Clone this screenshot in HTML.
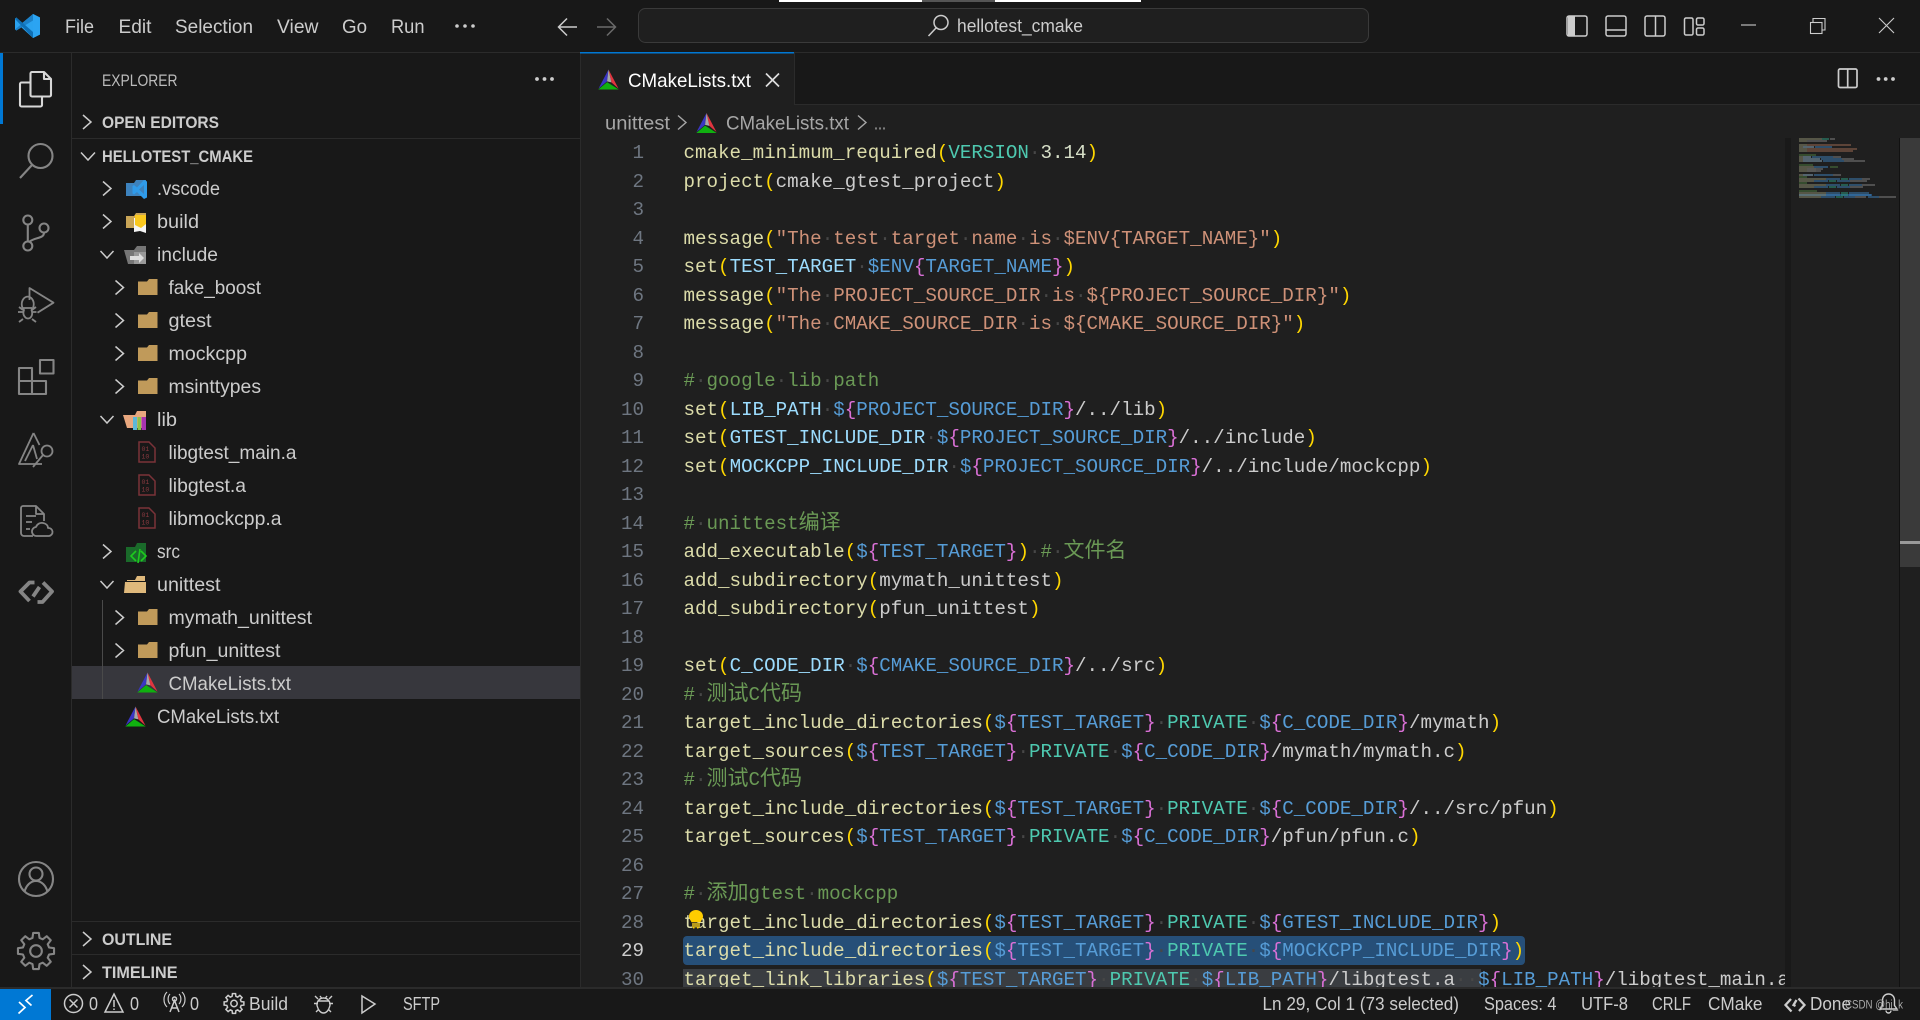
<!DOCTYPE html>
<html lang="en"><head><meta charset="utf-8"><title>CMakeLists.txt - hellotest_cmake</title>
<style>
html,body{margin:0;padding:0;width:1920px;height:1020px;overflow:hidden;background:#1f1f1f}
#bg{position:absolute;left:0;top:0;z-index:0}
#ui{position:absolute;left:0;top:0;z-index:2}
svg text{font-family:"Liberation Sans",sans-serif;fill:#ccc}
#nums,#code{position:absolute;top:139px;font:19.2px/28.5px "Liberation Mono",monospace}
#nums{left:600px;width:44px;text-align:right;color:#6e7681;z-index:1}
#nums div,#code .l{height:28.5px;white-space:pre}
#nums .a{color:#ccc}
#clip{position:absolute;left:0;top:105px;width:1791px;height:882px;overflow:hidden;z-index:1}
#clip #nums,#clip #code{top:34px}
#code{left:683.5px;color:#ccc}
#code i{font-style:normal}
#code s{text-decoration:none;color:#474747}
.f{color:#dcdcaa}.p{color:#ffd700}.k{color:#4ec9b0}.t{color:#ce9178}.v{color:#9cdcfe}.d{color:#569cd6}.m{color:#da70d6}.c,.c s{color:#6a9955}.n{color:#d7dfc8}
.z{font:21px/1 "Noto Sans CJK SC","Liberation Sans",sans-serif;color:#6a9955}
#sel{position:absolute;left:683px;top:831px;width:842px;height:29px;background:#264f78;border-radius:4px}
#hl{position:absolute;left:683px;top:864px;width:798px;height:18px;background:#3a3d41}
</style></head><body>
<svg id="bg" width="1920" height="1020" viewBox="0 0 1920 1020">
<rect width="1920" height="1020" fill="#1f1f1f"/>
<rect width="1920" height="104" fill="#181818"/>
<rect y="0" width="72" height="988" fill="#181818"/>
<rect x="72" y="53" width="508" height="935" fill="#181818"/>
<rect x="580" y="53" width="214" height="52" fill="#1f1f1f"/>
</svg>
<div id="clip">
<div id="sel"></div><div id="hl"></div>
<div id="nums"><div>1</div><div>2</div><div>3</div><div>4</div><div>5</div><div>6</div><div>7</div><div>8</div><div>9</div><div>10</div><div>11</div><div>12</div><div>13</div><div>14</div><div>15</div><div>16</div><div>17</div><div>18</div><div>19</div><div>20</div><div>21</div><div>22</div><div>23</div><div>24</div><div>25</div><div>26</div><div>27</div><div>28</div><div class="a">29</div><div>30</div></div>
<div id="code">
<div class="l"><i class="f">cmake_minimum_required</i><i class="p">(</i><i class="k">VERSION</i><s>·</s><i class="n">3.14</i><i class="p">)</i></div>
<div class="l"><i class="f">project</i><i class="p">(</i>cmake_gtest_project<i class="p">)</i></div>
<div class="l"></div>
<div class="l"><i class="f">message</i><i class="p">(</i><i class="t">"The<s>·</s>test<s>·</s>target<s>·</s>name<s>·</s>is<s>·</s>$ENV{TARGET_NAME}"</i><i class="p">)</i></div>
<div class="l"><i class="f">set</i><i class="p">(</i><i class="v">TEST_TARGET</i><s>·</s><i class="d">$ENV</i><i class="m">{</i><i class="d">TARGET_NAME</i><i class="m">}</i><i class="p">)</i></div>
<div class="l"><i class="f">message</i><i class="p">(</i><i class="t">"The<s>·</s>PROJECT_SOURCE_DIR<s>·</s>is<s>·</s>${PROJECT_SOURCE_DIR}"</i><i class="p">)</i></div>
<div class="l"><i class="f">message</i><i class="p">(</i><i class="t">"The<s>·</s>CMAKE_SOURCE_DIR<s>·</s>is<s>·</s>${CMAKE_SOURCE_DIR}"</i><i class="p">)</i></div>
<div class="l"></div>
<div class="l"><i class="c">#<s>·</s>google<s>·</s>lib<s>·</s>path</i></div>
<div class="l"><i class="f">set</i><i class="p">(</i><i class="v">LIB_PATH</i><s>·</s><i class="d">$</i><i class="m">{</i><i class="d">PROJECT_SOURCE_DIR</i><i class="m">}</i>/../lib<i class="p">)</i></div>
<div class="l"><i class="f">set</i><i class="p">(</i><i class="v">GTEST_INCLUDE_DIR</i><s>·</s><i class="d">$</i><i class="m">{</i><i class="d">PROJECT_SOURCE_DIR</i><i class="m">}</i>/../include<i class="p">)</i></div>
<div class="l"><i class="f">set</i><i class="p">(</i><i class="v">MOCKCPP_INCLUDE_DIR</i><s>·</s><i class="d">$</i><i class="m">{</i><i class="d">PROJECT_SOURCE_DIR</i><i class="m">}</i>/../include/mockcpp<i class="p">)</i></div>
<div class="l"></div>
<div class="l"><i class="c">#<s>·</s>unittest</i><span class="z">编译</span></div>
<div class="l"><i class="f">add_executable</i><i class="p">(</i><i class="d">$</i><i class="m">{</i><i class="d">TEST_TARGET</i><i class="m">}</i><i class="p">)</i><s>·</s><i class="c">#<s>·</s></i><span class="z">文件名</span></div>
<div class="l"><i class="f">add_subdirectory</i><i class="p">(</i>mymath_unittest<i class="p">)</i></div>
<div class="l"><i class="f">add_subdirectory</i><i class="p">(</i>pfun_unittest<i class="p">)</i></div>
<div class="l"></div>
<div class="l"><i class="f">set</i><i class="p">(</i><i class="v">C_CODE_DIR</i><s>·</s><i class="d">$</i><i class="m">{</i><i class="d">CMAKE_SOURCE_DIR</i><i class="m">}</i>/../src<i class="p">)</i></div>
<div class="l"><i class="c">#<s>·</s></i><span class="z">测试</span><i class="c">C</i><span class="z">代码</span></div>
<div class="l"><i class="f">target_include_directories</i><i class="p">(</i><i class="d">$</i><i class="m">{</i><i class="d">TEST_TARGET</i><i class="m">}</i><s>·</s><i class="k">PRIVATE</i><s>·</s><i class="d">$</i><i class="m">{</i><i class="d">C_CODE_DIR</i><i class="m">}</i>/mymath<i class="p">)</i></div>
<div class="l"><i class="f">target_sources</i><i class="p">(</i><i class="d">$</i><i class="m">{</i><i class="d">TEST_TARGET</i><i class="m">}</i><s>·</s><i class="k">PRIVATE</i><s>·</s><i class="d">$</i><i class="m">{</i><i class="d">C_CODE_DIR</i><i class="m">}</i>/mymath/mymath.c<i class="p">)</i></div>
<div class="l"><i class="c">#<s>·</s></i><span class="z">测试</span><i class="c">C</i><span class="z">代码</span></div>
<div class="l"><i class="f">target_include_directories</i><i class="p">(</i><i class="d">$</i><i class="m">{</i><i class="d">TEST_TARGET</i><i class="m">}</i><s>·</s><i class="k">PRIVATE</i><s>·</s><i class="d">$</i><i class="m">{</i><i class="d">C_CODE_DIR</i><i class="m">}</i>/../src/pfun<i class="p">)</i></div>
<div class="l"><i class="f">target_sources</i><i class="p">(</i><i class="d">$</i><i class="m">{</i><i class="d">TEST_TARGET</i><i class="m">}</i><s>·</s><i class="k">PRIVATE</i><s>·</s><i class="d">$</i><i class="m">{</i><i class="d">C_CODE_DIR</i><i class="m">}</i>/pfun/pfun.c<i class="p">)</i></div>
<div class="l"></div>
<div class="l"><i class="c">#<s>·</s></i><span class="z">添加</span><i class="c">gtest<s>·</s>mockcpp</i></div>
<div class="l"><i class="f">target_include_directories</i><i class="p">(</i><i class="d">$</i><i class="m">{</i><i class="d">TEST_TARGET</i><i class="m">}</i><s>·</s><i class="k">PRIVATE</i><s>·</s><i class="d">$</i><i class="m">{</i><i class="d">GTEST_INCLUDE_DIR</i><i class="m">}</i><i class="p">)</i></div>
<div class="l"><i class="f">target_include_directories</i><i class="p">(</i><i class="d">$</i><i class="m">{</i><i class="d">TEST_TARGET</i><i class="m">}</i><s>·</s><i class="k">PRIVATE</i><s>·</s><i class="d">$</i><i class="m">{</i><i class="d">MOCKCPP_INCLUDE_DIR</i><i class="m">}</i><i class="p">)</i></div>
<div class="l"><i class="f">target_link_libraries</i><i class="p">(</i><i class="d">$</i><i class="m">{</i><i class="d">TEST_TARGET</i><i class="m">}</i><s>·</s><i class="k">PRIVATE</i><s>·</s><i class="d">$</i><i class="m">{</i><i class="d">LIB_PATH</i><i class="m">}</i>/libgtest.a<s>··</s><i class="d">$</i><i class="m">{</i><i class="d">LIB_PATH</i><i class="m">}</i>/libgtest_main.a</div>
</div>
</div>
<svg id="ui" width="1920" height="1020" viewBox="0 0 1920 1020" fill="none">
<defs>
<symbol id="cm" viewBox="0 0 22 21"><path d="M11 0L.5 20l9-7.500z" fill="#3a35c4"/><path d="M11 0l10.500 20-7.500-6.500z" fill="#e0353f"/><path d="M11 0L9.500 12.500l4.500 1z" fill="#a8a8a8"/><path d="M.3 21h21.400L9.500 13.200z" fill="#10b010"/></symbol>
<symbol id="fo" viewBox="0 0 20 16"><path d="M0 2.500h9L11 0h8.500v16H0z" fill="#c09a5a"/></symbol>
<symbol id="bn" viewBox="0 0 18 22"><path d="M1 1h10l6 6v14H1z" stroke="#7a3238" stroke-width="1.500" fill="none"/><text x="3.500" y="10" style="font:6.500px 'Liberation Mono',monospace;fill:#8a3a40">01</text><text x="3.500" y="17.500" style="font:6.500px 'Liberation Mono',monospace;fill:#8a3a40">10</text></symbol>
<symbol id="gr" viewBox="-115 -115 230 230"><path vector-effect="non-scaling-stroke" d="M71.500-19.200L98.800-15.600V15.600L71.500 19.200L64.100 37L80.900 58.800L58.800 80.900L37 64.100L19.200 71.500L15.600 98.800H-15.600L-19.200 71.500L-37 64.100L-58.800 80.900L-80.900 58.800L-64.100 37L-71.500 19.200L-98.800 15.600V-15.600L-71.500-19.200L-64.100-37L-80.900-58.800L-58.800-80.900L-37-64.100L-19.200-71.500L-15.600-98.800H15.600L19.200-71.500L37-64.100L58.800-80.900L80.900-58.800L64.100-37z"/><circle vector-effect="non-scaling-stroke" r="32"/></symbol>
</defs>

<!-- top stripes -->
<rect x="779" y="0" width="143" height="2" fill="#fff"/><rect x="922" y="0" width="73" height="2" fill="#555"/><rect x="995" y="0" width="146" height="2" fill="#fff"/>

<!-- borders -->
<g fill="#2b2b2b">
<rect y="52" width="1920" height="1"/><rect x="71" y="53" width="1" height="935"/><rect x="580" y="53" width="1" height="935"/>
<rect x="794" y="53" width="1" height="52"/><rect x="795" y="104" width="1125" height="1"/>
<rect x="72" y="138" width="508" height="1"/><rect x="72" y="921" width="508" height="1"/><rect x="72" y="954" width="508" height="1"/>
</g>
<rect x="580" y="52" width="214" height="1.500" fill="#0078d4"/>

<!-- logo -->
<path d="M33 14l7 3.500v17L33 38 21 27l-4.500 3.500-1.500-1v-11l1.500-1L21 24z" fill="#2aa3f0"/>
<path d="M33 14L15 29.500l1.500 1L33 20.500z" fill="#1b80c8"/><path d="M33 38L15 19l1.500-1.500L33 32z" fill="#0e6fb5"/><path d="M33 14l7 3.500v17L33 38z" fill="#2ba4f2"/>

<!-- menu -->
<g font-size="19.500">
<text x="65" y="33" textLength="29" lengthAdjust="spacingAndGlyphs">File</text>
<text x="118.500" y="33" textLength="33" lengthAdjust="spacingAndGlyphs">Edit</text>
<text x="175" y="33" textLength="78" lengthAdjust="spacingAndGlyphs">Selection</text>
<text x="277" y="33" textLength="41.500" lengthAdjust="spacingAndGlyphs">View</text>
<text x="342" y="33" textLength="25" lengthAdjust="spacingAndGlyphs">Go</text>
<text x="391" y="33" textLength="33.500" lengthAdjust="spacingAndGlyphs">Run</text>
</g>
<g fill="#ccc"><circle cx="457" cy="26" r="1.800"/><circle cx="465" cy="26" r="1.800"/><circle cx="473" cy="26" r="1.800"/></g>
<path d="M577 27H559M567 18.500L558.500 27l8.500 8.500" stroke="#ccc" stroke-width="1.500"/>
<path d="M597 27h18M607 18.500l8.500 8.500-8.500 8.500" stroke="#6a6a6a" stroke-width="1.500"/>
<rect x="638.500" y="8.500" width="730" height="34" rx="7" fill="#1f1f1f" stroke="#3a3a3a"/>
<circle cx="941" cy="22.500" r="7" stroke="#ccc" stroke-width="1.500"/><path d="M936 28l-7.500 8" stroke="#ccc" stroke-width="1.500"/>
<text x="957" y="32" font-size="18" textLength="126" lengthAdjust="spacingAndGlyphs">hellotest_cmake</text>

<!-- layout controls -->
<g stroke="#ccc" stroke-width="1.500">
<rect x="1567" y="16" width="20" height="20" rx="2"/><path d="M1568 16.500h7v19h-7z" fill="#ccc" stroke="none"/>
<rect x="1606" y="16" width="20" height="20" rx="2"/><path d="M1606 30h20"/>
<rect x="1645" y="16" width="20" height="20" rx="2"/><path d="M1655.500 16v20"/>
<rect x="1684.500" y="18" width="8.500" height="17" rx="1.500"/><rect x="1696.500" y="18" width="7.500" height="7" rx="1.500"/><rect x="1696.500" y="28" width="7.500" height="7" rx="1.500"/>
</g>
<g stroke="#ccc" stroke-width="1.100">
<path d="M1741 25h15"/>
<rect x="1810.500" y="22.500" width="11.500" height="11"/><path d="M1813 22v-3.500h12v11.500h-3"/>
<path d="M1879 18l15 15M1894 18l-15 15"/>
</g>

<!-- activity bar -->
<rect x="0" y="53" width="3" height="71" fill="#0078d4"/>
<g stroke="#d7d7d7" stroke-width="2.100" stroke-linejoin="round">
<path d="M32 72h12l7 7v16a1.500 1.500 0 0 1-1.500 1.500H32a1.500 1.500 0 0 1-1.500-1.500V73.500A1.500 1.500 0 0 1 32 72zM44 72v7h7"/>
<path d="M30.500 82.500h-9a1.500 1.500 0 0 0-1.500 1.500v21a1.500 1.500 0 0 0 1.500 1.500H40.500a1.500 1.500 0 0 0 1.500-1.500v-8.500"/>
</g>
<g stroke="#858585" stroke-width="2.100" stroke-linejoin="round">
<circle cx="40.500" cy="156" r="12"/><path d="M32 165l-12 13"/>
<circle cx="27.800" cy="220" r="4.500"/><circle cx="27.800" cy="246" r="4.500"/><circle cx="44" cy="228" r="4.500"/><path d="M27.800 224.500v17M44 232.500c0 6.500-9 4.500-15 9.500"/>
<path d="M29.500 300v-12l24 14.700-16 10M24 310a6 7.500 0 1 1 7.500 0c1 2.500 1 5-.5 7-1.500 2-4.500 2-6 0-2-2-2-4.500-1-7zM18 312h5M31.500 312h5M19 307l4 3M36 307l-4 3M19 322l4-3M36 322l-4-3M23 308h9" stroke-width="1.800"/>
<path d="M19 368h13v13H19zM19 381h13v13H19zM32 381h14v13H32zM40 360h13.500v13.500H40z"/>
<path d="M33.500 433L19 464h23M33.500 433l6 12M33 445l-8 16M33 445l4 14" stroke-width="1.800"/><circle cx="47" cy="451" r="5.500" stroke-width="1.800"/><path d="M43 455l-10 12" stroke-width="1.800"/>
<path d="M33 536H24a3 3 0 0 1-3-3v-25a2 2 0 0 1 2-2h13l8 8v7M36 506v8h8M26 516h10M26 522h6M26 529h4" stroke-width="1.800"/>
<path d="M37 536a4.500 4.500 0 0 1-1-9c1-3 4-4.500 7-4 3 .5 5 2.500 5 5a4 4 0 0 1 1 8z" stroke-width="1.800"/>
<path d="M34.500 582.500H29.500L20.500 591.500 29.500 601M37.500 602H42.500L52 591.500 43 582.500M39.500 587l-6.500 9.500" stroke-width="3.800"/>
<circle cx="36" cy="879" r="17"/><circle cx="36" cy="874" r="6.500"/><path d="M24.500 892c1.500-7 6.500-11 11.500-11s10 4 11.500 11"/>
<use href="#gr" x="15" y="930" width="42" height="42" stroke="#858585" stroke-width="2.100"/>
</g>

<!-- sidebar headers -->
<text x="102" y="86" font-size="16.500" textLength="75.500" lengthAdjust="spacingAndGlyphs" style="fill:#bbb">EXPLORER</text>
<g fill="#ccc"><circle cx="537" cy="79" r="1.900"/><circle cx="544.500" cy="79" r="1.900"/><circle cx="552" cy="79" r="1.900"/></g>
<g font-size="16.500" font-weight="700">
<text x="102" y="128" textLength="117" lengthAdjust="spacingAndGlyphs">OPEN EDITORS</text>
<text x="102" y="162" textLength="151" lengthAdjust="spacingAndGlyphs">HELLOTEST_CMAKE</text>
<text x="102" y="945" textLength="70" lengthAdjust="spacingAndGlyphs">OUTLINE</text>
<text x="102" y="978" textLength="75.500" lengthAdjust="spacingAndGlyphs">TIMELINE</text>
</g>

<!-- selection row -->
<rect x="72" y="666" width="508" height="33" fill="#37373d"/>
<rect x="102" y="600" width="1" height="99" fill="#4a4a4a"/>

<!-- chevrons -->
<g stroke="#ccc" stroke-width="1.500">
<path d="M83 115l8 7-8 7M81 152.500l7 7.500 7-7.500M83 932l8 7-8 7M83 965l8 7-8 7"/>
<path d="M103 181.500l8 7-8 7M103 214.500l8 7-8 7M100.500 251l6.500 7 6.500-7M115.500 280.500l8 7-8 7M115.500 313.500l8 7-8 7M115.500 346.500l8 7-8 7M115.500 379.500l8 7-8 7M100.500 416l6.500 7 6.500-7M103 544.500l8 7-8 7M100.500 581l6.500 7 6.500-7M115.500 610.500l8 7-8 7M115.500 643.500l8 7-8 7"/>
</g>

<!-- tree icons -->
<path d="M126 183h8l2-3h10v16h-20z" fill="#3d82bd"/>
<path d="M144 180l3 1.500v16L144 199l-7-7-3 2.500-1.500-1V186l1.500-1 3 2.500z" fill="#2f9bea"/><path d="M144 185l-5 4.500 5 4.500z" fill="#3d82bd"/>
<path d="M126 216h8l2-3h10v15h-20z" fill="#c9a557"/>
<path d="M134 218h12v15l-6-2-6 1z" fill="#f4f4f4"/><path d="M135 215h11v9l-5 4-6-3z" fill="#fac81e"/>
<path d="M124 250h10l3-4h9v18h-18z" fill="#767676"/><path d="M134 252h12v12h-12z" fill="#999"/><path d="M130 256h9v-3l5 5-5 5v-3h-9z" fill="#ddd"/>
<path d="M123 415h12l2-4h9v17h-19z" fill="#e8a77e"/>
<rect x="133" y="417" width="4" height="13" fill="#5bb8d8"/><rect x="137.500" y="417" width="3.500" height="13" fill="#8bc34a"/><rect x="141.500" y="417" width="4.500" height="13" fill="#a833b0"/>
<path d="M126 547h9l2-4h9v19h-20z" fill="#1a6a2a"/>
<path d="M136 551l-5 5 5 5M141 551l5 5-5 5M140 549l-2 14" stroke="#1ecb1e" stroke-width="1.600"/>
<path d="M127 580h8l2-4h8v5h-18zM124 593l1-11h21v11z" fill="#dfb97c"/>
<use href="#fo" x="138" y="279" width="20" height="16"/><use href="#fo" x="138" y="312" width="20" height="16"/><use href="#fo" x="138" y="345" width="20" height="16"/><use href="#fo" x="138" y="378" width="20" height="16"/>
<use href="#fo" x="138" y="609" width="20" height="16"/><use href="#fo" x="138" y="642" width="20" height="16"/>
<use href="#bn" x="138" y="441" width="18" height="22"/><use href="#bn" x="138" y="474" width="18" height="22"/><use href="#bn" x="138" y="507" width="18" height="22"/>
<use href="#cm" x="137" y="672" width="21" height="21"/><use href="#cm" x="125" y="706" width="21" height="21"/>

<!-- tree labels -->
<g font-size="19.500">
<text x="157" y="195" textLength="63" lengthAdjust="spacingAndGlyphs">.vscode</text>
<text x="157" y="228" textLength="42" lengthAdjust="spacingAndGlyphs">build</text>
<text x="157" y="261" textLength="61" lengthAdjust="spacingAndGlyphs">include</text>
<text x="168.500" y="294" textLength="92.500" lengthAdjust="spacingAndGlyphs">fake_boost</text>
<text x="168.500" y="327" textLength="43" lengthAdjust="spacingAndGlyphs">gtest</text>
<text x="168.500" y="360" textLength="78.500" lengthAdjust="spacingAndGlyphs">mockcpp</text>
<text x="168.500" y="393" textLength="92.500" lengthAdjust="spacingAndGlyphs">msinttypes</text>
<text x="157" y="426" textLength="20" lengthAdjust="spacingAndGlyphs">lib</text>
<text x="168.500" y="459" textLength="128" lengthAdjust="spacingAndGlyphs">libgtest_main.a</text>
<text x="168.500" y="492" textLength="77.500" lengthAdjust="spacingAndGlyphs">libgtest.a</text>
<text x="168.500" y="525" textLength="113" lengthAdjust="spacingAndGlyphs">libmockcpp.a</text>
<text x="157" y="558" textLength="23" lengthAdjust="spacingAndGlyphs">src</text>
<text x="157" y="591" textLength="63.500" lengthAdjust="spacingAndGlyphs">unittest</text>
<text x="168.500" y="624" textLength="143.500" lengthAdjust="spacingAndGlyphs">mymath_unittest</text>
<text x="168.500" y="657" textLength="112" lengthAdjust="spacingAndGlyphs">pfun_unittest</text>
<text x="168.500" y="690" textLength="122.500" lengthAdjust="spacingAndGlyphs">CMakeLists.txt</text>
<text x="157" y="723" textLength="122" lengthAdjust="spacingAndGlyphs">CMakeLists.txt</text>
</g>

<!-- tab -->
<use href="#cm" x="598" y="69" width="21" height="21"/>
<text x="628" y="87" font-size="19.500" textLength="123" lengthAdjust="spacingAndGlyphs" style="fill:#fff">CMakeLists.txt</text>
<path d="M766 73.500l13 13M779 73.500l-13 13" stroke="#ddd" stroke-width="1.700"/>
<g stroke="#ccc" stroke-width="1.700"><rect x="1838.500" y="69" width="18.500" height="18.500" rx="1.500"/><path d="M1847.700 69v18.500"/></g>
<g fill="#ccc"><circle cx="1878.500" cy="79" r="1.900"/><circle cx="1885.700" cy="79" r="1.900"/><circle cx="1893" cy="79" r="1.900"/></g>

<!-- breadcrumb -->
<g font-size="19.500">
<text x="605" y="129.500" textLength="65" lengthAdjust="spacingAndGlyphs" style="fill:#a6a6a6">unittest</text>
<text x="726" y="129.500" textLength="123" lengthAdjust="spacingAndGlyphs" style="fill:#a6a6a6">CMakeLists.txt</text>
<text x="874" y="129.500" textLength="12" lengthAdjust="spacingAndGlyphs" style="fill:#a6a6a6">...</text>
</g>
<path d="M678 115.500l8 7-8 7M858 115.500l8 7-8 7" stroke="#a6a6a6" stroke-width="1.400"/>
<use href="#cm" x="696" y="113" width="21" height="20"/>

<!-- lightbulb -->
<path d="M696 910c4 0 7 2.800 7 6.300 0 2.700-1.700 4-2.500 6h-9c-.8-2-2.500-3.300-2.500-6 0-3.500 3-6.300 7-6.300z" fill="#ffcc00"/>
<path d="M692 923h8v4.500h-8z" fill="#b89a1c"/><path d="M693 927h1.500v1.500H693zM697 927h1.500v1.500H697z" fill="#ffcc00"/>

<!-- minimap & scrollbar -->
<rect x="1791" y="138" width="108" height="850" fill="#1f1f1f"/>
<rect x="1785" y="138" width="6" height="850" fill="#191919"/>
<rect x="1899" y="138" width="1" height="850" fill="#111"/>
<rect x="1900" y="138" width="20" height="429" fill="#3a3a3a"/>
<rect x="1900" y="541" width="20" height="3" fill="#9a9a9a"/>
<rect x="1799" y="194" width="73" height="2" fill="#264f78"/>
<g stroke-width="1.300" opacity=".8">
<path stroke="#8f8f70" d="M1799 139h23M1799 141h8M1799 145h8M1799 147h4M1799 149h8M1799 151h8M1799 157h4M1799 159h4M1799 161h4M1799 167h15M1799 169h17M1799 171h17M1799 175h4M1799 179h27M1799 181h15M1799 185h27M1799 187h15M1799 193h27M1799 195h27M1799 197h22"/>
<path stroke="#2f9a80" d="M1822 139h7M1841 179h7M1829 181h7M1841 185h7M1829 187h7M1841 193h7M1841 195h7M1836 197h7"/>
<path stroke="#808080" d="M1830 139h5M1807 141h20M1833 157h8M1842 159h12M1844 161h21M1807 169h16M1807 171h14M1833 175h8M1862 179h8M1850 181h17M1862 185h13M1850 187h13M1855 197h11M1879 197h17"/>
<path stroke="#9b6a52" d="M1807 145h44M1807 149h50M1807 151h46"/>
<path stroke="#8aaac0" d="M1803 147h11M1803 157h8M1803 159h17M1803 161h19M1803 175h10"/>
<path stroke="#3d7fb5" d="M1815 147h17M1812 157h21M1821 159h21M1823 161h21M1814 167h14M1814 175h19M1826 179h14M1849 179h13M1814 181h14M1837 181h13M1826 185h14M1849 185h13M1814 187h14M1837 187h13M1826 193h14M1849 193h20M1826 195h14M1849 195h22M1821 197h14M1844 197h11M1868 197h11"/>
<path stroke="#4f7a40" d="M1799 155h17M1799 165h14M1830 167h8M1799 177h8M1799 183h8M1799 191h18"/>
</g>

<!-- status bar -->
<rect y="987" width="1920" height="33" fill="#181818"/><rect y="987" width="1920" height="2" fill="#2b2b2b"/>
<rect y="989" width="51" height="31" fill="#0078d4"/>
<path d="M19 1002l6 5.500-6.500 6M32.500 995l-6.500 5.500 5.500 5" stroke="#fff" stroke-width="1.700"/>
<g stroke="#ccc" stroke-width="1.500">
<circle cx="73.500" cy="1003.500" r="9"/><path d="M69.500 999.500l8 8M77.500 999.500l-8 8"/>
<path d="M114 994l9 18h-18zM114 1000v7M114 1008.500v1.500"/>
<path d="M170 1012l4.500-11.500 4.500 11.500M171.500 1008h6"/><circle cx="174.500" cy="999" r="2"/><path d="M170 994c-2.500 2.500-2.500 7.500 0 10M179 994c2.500 2.500 2.500 7.500 0 10M167 992c-4 4-4 11 0 15M182 992c4 4 4 11 0 15" stroke-width="1.200"/>
<use href="#gr" x="222.500" y="992" width="23" height="23" stroke="#ccc" stroke-width="1.500"/>
<path d="M323.500 998a6.500 6.500 0 0 1 6 9c-.8 3-3 6-6 6s-5.200-3-6-6a6.500 6.500 0 0 1 6-9zM318 1001h11M314 1003.500h4M329 1003.500h4M315 996l3 3M332 996l-3 3M316 1012l3-3M331 1012l-3-3M320 996l1.500 2M327 996l-1.500 2" stroke-width="1.400"/>
<path d="M362 996l13 8-13 9z"/>
</g>
<g font-size="18">
<text x="89" y="1010" textLength="9" lengthAdjust="spacingAndGlyphs">0</text>
<text x="130" y="1010" textLength="9" lengthAdjust="spacingAndGlyphs">0</text>
<text x="190" y="1010" textLength="9" lengthAdjust="spacingAndGlyphs">0</text>
<text x="249" y="1010" textLength="39" lengthAdjust="spacingAndGlyphs">Build</text>
<text x="403" y="1010" textLength="37" lengthAdjust="spacingAndGlyphs">SFTP</text>
<text x="1262.500" y="1010" textLength="196.500" lengthAdjust="spacingAndGlyphs">Ln 29, Col 1 (73 selected)</text>
<text x="1484" y="1010" textLength="72.500" lengthAdjust="spacingAndGlyphs">Spaces: 4</text>
<text x="1581" y="1010" textLength="47" lengthAdjust="spacingAndGlyphs">UTF-8</text>
<text x="1652" y="1010" textLength="39" lengthAdjust="spacingAndGlyphs">CRLF</text>
<text x="1708" y="1010" textLength="54.500" lengthAdjust="spacingAndGlyphs">CMake</text>
<text x="1810" y="1010" textLength="41" lengthAdjust="spacingAndGlyphs">Done</text>
</g>
<path d="M1791 999l-5.500 6 6 6.500M1799 1011l5.500-6-6-6.500M1796.500 1000l-3 5 2 1" stroke="#ccc" stroke-width="2.300"/>
<path d="M1888.500 994c3.500 0 6 2.500 6 6.500v5l2.500 3.500h-17l2.500-3.500v-5c0-4 2.500-6.500 6-6.500zM1886 1010.500a2.500 2.500 0 0 0 5 0" stroke="#d0d0d0" stroke-width="1.400"/>
<text x="1845" y="1008.500" font-size="11.500" textLength="58" lengthAdjust="spacingAndGlyphs" style="fill:#aaa">CSDN @hi_k</text>
</svg>
</body></html>
